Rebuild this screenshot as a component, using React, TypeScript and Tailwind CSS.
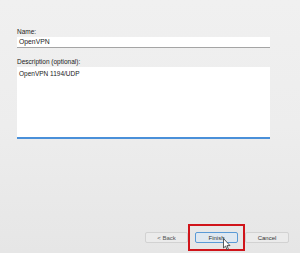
export default function App() {
  return (
    <div
      className="w-[300px] h-[253px] flex flex-col bg-gradient-to-b from-[#f0f0f0] via-[#ededed] to-[#e6e6e6] text-[#1a1a1a]"
      style={{ fontFamily: '"Liberation Sans", Arial, sans-serif' }}
    >
      <div className="flex flex-col pl-[17px] pt-[28px] w-[270px]">
        <label className="text-[6.5px] leading-[8px] text-[#222] h-[9px]">Name:</label>
        <div className="h-[11px] bg-white border-b border-[#a5a5a5] flex items-center pl-[2px] text-[6.8px] leading-none">
          OpenVPN
        </div>
        <label className="text-[6.5px] leading-[8px] text-[#222] mt-[10px] h-[9px]">Description (optional):</label>
        <div className="h-[72px] bg-white border-b-2 border-[#4a90d9] pl-[2px] pt-[3px] text-[6.5px] leading-[8px]">
          OpenVPN 1194/UDP
        </div>
      </div>

      <div className="flex-1" />

      <div className="flex justify-end items-center gap-[7px] pr-[11px] pb-[10px]">
        <button className="flex items-center justify-center w-[43px] h-[11px] rounded-[2px] border border-[#d2d2d2] bg-[#ebebeb] text-[6px] leading-none text-[#555]">
          &lt; Back
        </button>
        <div className="relative flex">
          <button className="flex items-center justify-center w-[43px] h-[11px] rounded-[2px] border border-[#5a9ad6] bg-[#dfe8f1] text-[6px] leading-none text-[#333]">
            Finish
          </button>
          <div className="absolute -left-[7px] -right-[7px] -top-[8px] -bottom-[8px] border-2 border-[#d0141a]" />
          <svg className="absolute left-[28px] top-[6px]" width="8" height="13" viewBox="0 0 8 13">
            <path d="M0.5 0.5 L0.5 10 L2.6 8 L4 11.8 L5.4 11.2 L4 7.6 L7 7.6 Z" fill="#fff" stroke="#333" strokeWidth="0.8" strokeLinejoin="round" />
          </svg>
        </div>
        <button className="flex items-center justify-center w-[44px] h-[11px] rounded-[2px] border border-[#d2d2d2] bg-[#ebebeb] text-[6px] leading-none text-[#333]">
          Cancel
        </button>
      </div>
    </div>
  );
}
